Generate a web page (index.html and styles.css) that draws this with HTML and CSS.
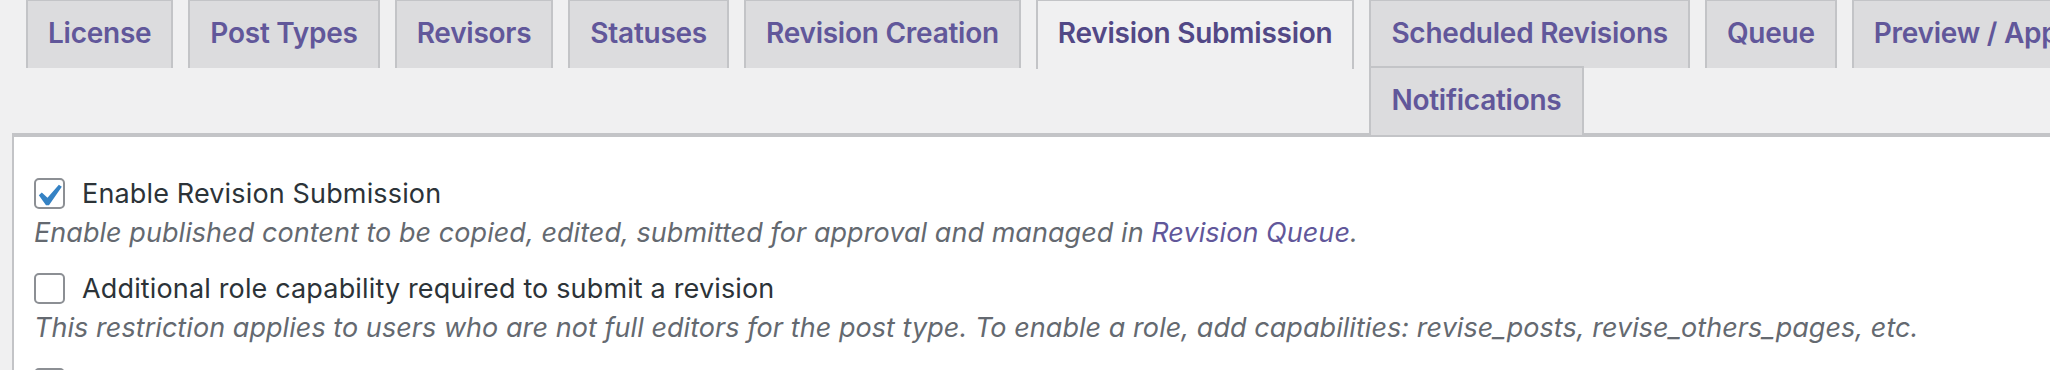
FILE: index.html
```html
<!DOCTYPE html>
<html lang="en">

<head>
    <meta charset="UTF-8">
    <meta name="viewport" content="width=device-width, initial-scale=1.0">
    <title>Revisions Settings</title>
    <link rel="stylesheet" href="styles.css">
</head>

<body>
    <div class="wrap">
        <nav class="nav-tab-wrapper">
            <a class="nav-tab" href="#">License</a>
            <a class="nav-tab" href="#">Post Types</a>
            <a class="nav-tab" href="#">Revisors</a>
            <a class="nav-tab" href="#">Statuses</a>
            <a class="nav-tab" href="#">Revision Creation</a>
            <a class="nav-tab nav-tab-active" href="#">Revision Submission</a>
            <a class="nav-tab" href="#">Scheduled Revisions</a>
            <a class="nav-tab" href="#">Queue</a>
            <a class="nav-tab" href="#">Preview / Approval</a>
            <a class="nav-tab" href="#">Notifications</a>
        </nav>

        <div class="settings-box">
            <div class="option">
                <label class="option-row">
                    <span class="cb is-checked">
                        <svg viewBox="4.5 2.8 12.2 12.2" width="27" height="27">
                            <path d="M14.83 4.89l1.34.94-5.81 8.38H9.02L5.78 9.67l1.34-1.25 2.57 2.4z" fill="#3582c4" />
                        </svg>
                    </span>
                    Enable Revision Submission
                </label>
                <p class="desc">Enable published content to be copied, edited, submitted for approval and managed in <a href="#">Revision Queue</a>.</p>
            </div>
            <div class="option">
                <label class="option-row">
                    <span class="cb"></span>
                    Additional role capability required to submit a revision
                </label>
                <p class="desc">This restriction applies to users who are not full editors for the post type. To enable a role, add capabilities: revise_posts, revise_others_pages, etc.</p>
            </div>
            <div class="option">
                <label class="option-row">
                    <span class="cb"></span>
                    Prevent Revisors from editing other user's drafts
                </label>
                <p class="desc">By default, Revisors can edit submitted revisions of other users.</p>
            </div>
        </div>
    </div>
</body>

</html>
```

FILE: styles.css
```css
body {
    margin: 0;
    background: #f0f0f1;
    overflow: hidden;
    font-family: Inter, "Noto Sans", sans-serif;
    color: #1d2327;
}

.wrap {
    width: 2280px;
    padding-left: 12px;
}

/* tabs float, like the wp-admin nav-tab-wrapper */
.nav-tab-wrapper {
    display: flow-root;
    margin-top: -1px;
    padding-left: 14px;
    border-bottom: 2px solid #c3c4c7;
}

.nav-tab {
    float: left;
    margin: 0 15px -2px 0;
    padding: 10px 20px 13px;
    border: 2px solid #c3c4c7;
    border-bottom: 0;
    background: #dcdcde;
    color: #61579a;
    font-size: 28px;
    font-weight: 600;
    line-height: 44px;
    letter-spacing: -0.25px;
    text-decoration: none;
    white-space: nowrap;
}

.nav-tab-active {
    padding-bottom: 14px;
    background: #f0f0f1;
    color: #524886;
}

.settings-box {
    background: #fff;
    border: 2px solid #c3c4c7;
    border-right: 0;
    padding: 41px 20px 0;
    height: 400px;
}

.option {
    margin-bottom: 24px;
}

.option-row {
    display: flex;
    align-items: center;
    gap: 17px;
    height: 31px;
    font-size: 27px;
    letter-spacing: 0.15px;
    color: #2c3338;
    cursor: pointer;
}

.cb {
    box-sizing: border-box;
    width: 31px;
    height: 31px;
    flex: none;
    border: 2px solid #8c8f94;
    border-radius: 5px;
    background: #fff;
}

.cb svg {
    display: block;
}

.desc {
    margin: 8px 0 0;
    font-size: 27px;
    line-height: 32px;
    letter-spacing: 0.05px;
    font-style: italic;
    color: #646970;
}

.desc a {
    color: #61579a;
    text-decoration: none;
}
```
